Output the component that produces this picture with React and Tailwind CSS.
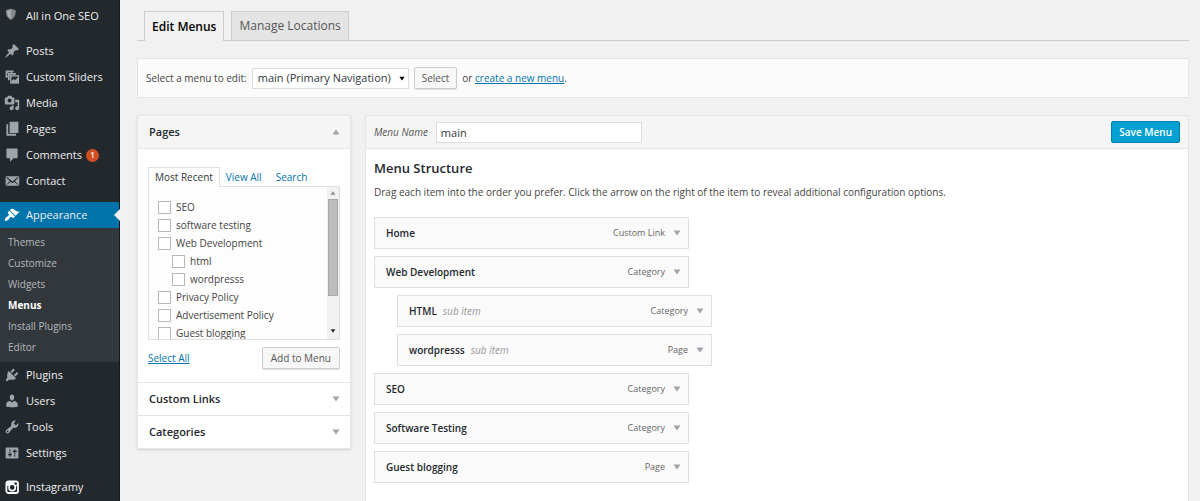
import React from "react";

const paths = {
  posts:
    "M10.44 3.02l1.82-1.82 6.36 6.35-1.83 1.82c-1.05-.68-2.48-.57-3.41.36l-.75.75c-.92.93-1.04 2.35-.35 3.41l-1.83 1.82-2.41-2.41-2.8 2.79c-.42.42-3.38 2.71-3.8 2.29s1.86-3.39 2.28-3.81l2.79-2.79L4.1 9.36l1.83-1.82c1.05.69 2.48.57 3.4-.36l.75-.75c.93-.92 1.05-2.35.36-3.41z",
  media:
    "M13 11V4c0-.55-.45-1-1-1h-1.67L9 1H5L3.67 3H2c-.55 0-1 .45-1 1v7c0 .55.45 1 1 1h10c.55 0 1-.45 1-1zM7 4.5c1.38 0 2.5 1.12 2.5 2.5S8.38 9.5 7 9.5 4.5 8.38 4.5 7 5.62 4.5 7 4.5zM14 6h5v10.5c0 1.38-1.12 2.5-2.5 2.5S14 17.88 14 16.5s1.12-2.5 2.5-2.5c.17 0 .34.02.5.05V9h-3V6zm-4 8.05V13h2v3.5c0 1.38-1.12 2.5-2.5 2.5S7 17.88 7 16.5 8.12 14 9.5 14c.17 0 .34.02.5.05z",
  pages: "M7 15V1h11v14H7zm-1 1h9v2.500H3V4h2.200v12z",
  comments:
    "M4 2h12c.6 0 1 .4 1 1v10c0 .6-.4 1-1 1h-4l-4.500 4.500V14H4c-.6 0-1-.4-1-1V3c0-.6.4-1 1-1z",
  contact:
    "M19 14.5v-9c0-.83-.67-1.5-1.5-1.5H3.49c-.83 0-1.5.67-1.5 1.5v9c0 .83.67 1.5 1.5 1.5H17.500c.83 0 1.5-.67 1.5-1.5zm-1.31-9.11c.33.33.15.67-.03.84L13.6 9.95l3.9 4.06c.12.14.2.36.06.51-.13.16-.43.15-.56.05l-4.37-3.73-2.14 1.95-2.13-1.95-4.37 3.73c-.13.1-.43.11-.56-.05-.14-.15-.06-.37.06-.51l3.9-4.06-4.06-3.72c-.18-.17-.36-.51-.03-.84s.67-.17.95.07l6.24 5.04 6.25-5.04c.28-.24.62-.4.95-.07z",
  appearance:
    "M14.48 11.06L7.41 3.99l1.5-1.5c.5-.56 2.3-.47 3.51.32 1.21.8 1.43 1.28 2.91 2.1 1.18.64 2.45 1.26 4.45.85zm-.71.71L6.7 4.7 4.93 6.47c-.39.39-.39 1.02 0 1.41l1.06 1.06c.39.39.39 1.03 0 1.42-.6.6-1.43 1.11-2.21 1.69-.35.26-.7.53-1.01.84C1.43 14.23.4 16.08 1.4 17.07c.99 1 2.84-.03 4.18-1.36.31-.31.58-.66.85-1.02.57-.78 1.08-1.61 1.69-2.21.39-.39 1.02-.39 1.41 0l1.06 1.06c.39.39 1.02.39 1.41 0z",
  plugins:
    "M13.11 4.36L9.87 7.6 8 5.73l3.24-3.24c.35-.34 1.05-.2 1.56.32.52.51.66 1.21.31 1.55zm-8 1.77l.91-1.12 9.01 9.01-1.19.84c-.71.71-2.63 1.16-3.82 1.16H6.14L4.9 17.26c-.59.59-1.54.59-2.12 0-.59-.58-.59-1.53 0-2.12l1.24-1.24v-3.88c0-1.13.4-3.19 1.09-3.89zm7.26 3.97l3.24-3.24c.34-.35 1.04-.21 1.55.31.52.51.66 1.21.31 1.55l-3.24 3.25z",
  users:
    "M10 9.25c-2.27 0-2.73-3.44-2.73-3.44C7 4.02 7.82 2 9.97 2c2.16 0 2.98 2.02 2.71 3.81 0 0-.41 3.44-2.68 3.44zm0 2.57L12.72 10c2.39 0 4.52 2.33 4.52 4.53v2.49s-3.65 1.13-7.24 1.13c-3.65 0-7.24-1.13-7.24-1.13v-2.49c0-2.25 1.94-4.48 4.47-4.48z",
  tools:
    "M16.68 9.77c-1.34 1.34-3.3 1.67-4.95.99l-5.41 6.52c-.99.99-2.59.99-3.58 0s-.99-2.59 0-3.57l6.52-5.42c-.68-1.65-.35-3.61.99-4.95 1.28-1.28 3.12-1.62 4.72-1.06l-2.89 2.89 2.82 2.82 2.86-2.87c.53 1.58.18 3.39-1.08 4.65zM3.81 16.21c.4.39 1.04.39 1.43 0 .4-.4.4-1.04 0-1.43-.39-.4-1.03-.4-1.43 0-.39.39-.39 1.03 0 1.43z",
  settings:
    "M18 16V4c0-.55-.45-1-1-1H3c-.55 0-1 .45-1 1v12c0 .55.45 1 1 1h14c.55 0 1-.45 1-1zM8 11h1c.55 0 1 .45 1 1s-.45 1-1 1H8v1.5c0 .28-.22.5-.5.5s-.5-.22-.5-.5V13H6c-.55 0-1-.45-1-1s.45-1 1-1h1V5.5c0-.28.22-.5.5-.5s.5.22.5.5V11zm5-2h-1c-.55 0-1-.45-1-1s.45-1 1-1h1V5.5c0-.28.22-.5.5-.5s.5.22.5.5V7h1c.55 0 1 .45 1 1s-.45 1-1 1h-1v5.5c0 .28-.22.5-.5.5s-.5-.22-.5-.5V9z",
};

function Icon({ name }) {
  if (name === "seo") {
    return (
      <svg viewBox="0 0 20 20" className="h-4 w-4 shrink-0" aria-hidden="true">
        <path d="M2.500 2.500c2.500-.2 4-.9 6-1.500 2 .6 3.500 1.300 6 1.500.6 6-1.500 10-6 12.500C4 12.500 2 8.500 2.500 2.500z" fill="#85898c" />
        <path d="M4 3.600c1.800-.2 3-.6 4.500-1.100v10.800C5 11 3.800 8.500 4 3.600z" fill="#adb0b2" />
      </svg>
    );
  }
  if (name === "sliders") {
    return (
      <svg viewBox="0 0 20 20" className="h-4 w-4 shrink-0" aria-hidden="true" fill="none" stroke="#a0a5aa">
        <path d="M3 11V3h9" strokeWidth="2" />
        <path d="M6 14V6h9" strokeWidth="2" />
        <rect x="8.500" y="8.500" width="9.500" height="9" strokeWidth="1.600" />
        <path d="M9 16l3-3 2 1.500 3.500-3.500v6H9z" fill="#a0a5aa" strokeWidth="1" />
        <path d="M3 3l7 7M8 3l6 6M3 8l5 5" strokeWidth="1.400" />
      </svg>
    );
  }
  if (name === "instagram") {
    return (
      <svg viewBox="0 0 20 20" className="h-4 w-4 shrink-0" aria-hidden="true">
        <rect x="3" y="3" width="14.500" height="14.500" rx="2.500" fill="none" stroke="#fff" strokeWidth="2.200" />
        <path d="M3 4h14v4.500H3z" fill="#fff" />
        <rect x="13" y="4.500" width="3" height="3" rx=".5" fill="#23282d" />
        <circle cx="10.250" cy="10.500" r="4" fill="#23282d" stroke="#fff" strokeWidth="2" />
      </svg>
    );
  }
  return (
    <svg viewBox="0 0 20 20" className="h-4 w-4 shrink-0" aria-hidden="true">
      <path d={paths[name]} fill={name === "appearance" ? "#fff" : "#a0a5aa"} />
    </svg>
  );
}

function NavItem({ icon, label, badge }) {
  return (
    <a href="#" className="flex h-[26px] items-center gap-1.5 pl-1 text-[11px] font-medium text-[#eee]">
      <Icon name={icon} />
      <span>{label}</span>
      {badge && (
        <span className="-ml-0.5 flex h-[13px] w-[13px] items-center justify-center rounded-full bg-[#d54e21] text-[8px] font-semibold text-white">
          {badge}
        </span>
      )}
    </a>
  );
}

function Triangle({ up = false, className = "h-1.5 w-2 text-[#a0a5aa]" }) {
  return (
    <svg viewBox="0 0 8 6" className={`shrink-0 ${className}`} aria-hidden="true">
      <path d={up ? "M4 0.5L7.500 5.500H.5z" : "M.5.5h7L4 5.500z"} fill="currentColor" />
    </svg>
  );
}

const submenu = ["Themes", "Customize", "Widgets", "Menus", "Install Plugins", "Editor"];

function Sidebar() {
  return (
    <nav className="w-[120px] shrink-0 border-r border-[#15191c] bg-[#23282d] pt-[3px]">
      <NavItem icon="seo" label="All in One SEO" />
      <div className="mt-[9px]">
        <NavItem icon="posts" label="Posts" />
        <NavItem icon="sliders" label="Custom Sliders" />
        <NavItem icon="media" label="Media" />
        <NavItem icon="pages" label="Pages" />
        <NavItem icon="comments" label="Comments" badge="1" />
        <NavItem icon="contact" label="Contact" />
      </div>
      <div className="relative mt-2 bg-[#0073aa]">
        <NavItem icon="appearance" label="Appearance" />
        <svg viewBox="0 0 6 12" className="absolute top-[7px] -right-px h-3 w-1.5" aria-hidden="true">
          <path d="M6 0v12L0 6z" fill="#f1f1f1" />
        </svg>
      </div>
      <ul className="bg-[#32373c] pt-1 pb-1">
        {submenu.map((label) => (
          <li key={label}>
            <a
              href="#"
              className={`flex h-[21px] items-center pl-2 text-[10px] ${
                label === "Menus" ? "font-bold text-white" : "text-[#b4b9be]"
              }`}
            >
              {label}
            </a>
          </li>
        ))}
      </ul>
      <NavItem icon="plugins" label="Plugins" />
      <NavItem icon="users" label="Users" />
      <NavItem icon="tools" label="Tools" />
      <NavItem icon="settings" label="Settings" />
      <div className="mt-2">
        <NavItem icon="instagram" label="Instagramy" />
      </div>
    </nav>
  );
}

const pages = [
  { label: "SEO" },
  { label: "software testing" },
  { label: "Web Development" },
  { label: "html", child: true },
  { label: "wordpresss", child: true },
  { label: "Privacy Policy" },
  { label: "Advertisement Policy" },
  { label: "Guest blogging" },
];

function PageList() {
  return (
    <div className="-mt-px flex h-[154px] border border-[#dfdfdf] bg-[#fdfdfd]">
      <div className="flex-1 overflow-hidden pt-[11px] pl-[9px]">
        {pages.map(({ label, child }) => (
          <label
            key={label}
            className={`flex h-[18px] items-center gap-[5px] text-[10px] text-[#444] ${child ? "ml-3.5" : ""}`}
          >
            <input type="checkbox" className="h-[13px] w-[13px] shrink-0 appearance-none border border-[#b4b9be] bg-white" />
            {label}
          </label>
        ))}
      </div>
      <div className="flex w-3 flex-col items-center bg-[#f1f1f1]">
        <div className="flex h-3 items-center">
          <Triangle up className="h-1 w-1.5 text-[#8a8a8a]" />
        </div>
        <div className="h-[97px] w-2.5 border border-[#a8a8a8] bg-[#bcbcbc]" />
        <div className="mt-auto flex h-4 items-center">
          <Triangle className="h-1 w-1.5 text-[#222]" />
        </div>
      </div>
    </div>
  );
}

function SectionToggle({ label }) {
  return (
    <button className="flex h-[33px] w-full items-center justify-between border-t border-[#e5e5e5] pr-2.5 pl-[11px] text-[11px] font-semibold text-[#23282d]">
      {label}
      <Triangle />
    </button>
  );
}

const btn = "rounded-[2px] border border-[#ccc] bg-[#f7f7f7] text-[10px] text-[#555] shadow-[0_1px_0_#e0e0e0]";

function PagesPanel() {
  return (
    <aside className="w-[214px] shrink-0 self-start border border-[#e5e5e5] bg-white shadow-sm">
      <button className="flex h-8 w-full items-center justify-between bg-[#f5f5f5] pr-2.5 pl-[11px] text-[11px] font-semibold text-[#23282d]">
        Pages
        <Triangle up />
      </button>
      <div className="border-t border-[#e5e5e5] px-2.5 pt-[18px] pb-[13px]">
        <div className="flex items-stretch text-[10px]">
          <button className="relative h-5 border border-b-0 border-[#dfdfdf] bg-[#fdfdfd] px-1.5 text-[#32373c]">
            Most Recent
          </button>
          <button className="ml-1.5 h-5 text-[#0073aa]">View All</button>
          <button className="ml-3.5 h-5 text-[#0073aa]">Search</button>
        </div>
        <PageList />
        <div className="mt-[7px] flex items-center justify-between">
          <a href="#" className="text-[10px] text-[#0073aa] underline">
            Select All
          </a>
          <button className={`${btn} h-[22px] px-2`}>Add to Menu</button>
        </div>
      </div>
      <SectionToggle label="Custom Links" />
      <SectionToggle label="Categories" />
    </aside>
  );
}

const items = [
  { title: "Home", type: "Custom Link" },
  { title: "Web Development", type: "Category" },
  { title: "HTML", type: "Category", sub: true },
  { title: "wordpresss", type: "Page", sub: true },
  { title: "SEO", type: "Category" },
  { title: "Software Testing", type: "Category" },
  { title: "Guest blogging", type: "Page" },
];

function MenuItem({ title, type, sub }) {
  return (
    <li
      className={`flex h-8 w-[315px] items-center border border-[#dfdfdf] bg-[#fafafa] pr-[7px] pl-[11px] text-[10px] ${
        sub ? "ml-[23px]" : ""
      }`}
    >
      <span className="font-semibold text-[#23282d]">{title}</span>
      {sub && <span className="ml-1.5 text-[#999] italic">sub item</span>}
      <span className="ml-auto text-[9px] text-[#666]">{type}</span>
      <button className="ml-2 flex" aria-label={`Edit ${title}`}>
        <Triangle />
      </button>
    </li>
  );
}

function MenuPanel() {
  return (
    <section className="min-w-0 flex-1 border border-b-0 border-[#e5e5e5] bg-white">
      <div className="flex h-[33px] items-center border-b border-[#e5e5e5] bg-[#f5f5f5] px-2">
        <label htmlFor="menu-name" className="text-[10px] text-[#555] italic">
          Menu Name
        </label>
        <input
          id="menu-name"
          defaultValue="main"
          className="ml-2 h-[21px] w-[206px] border border-[#ddd] bg-white px-1 text-[11px] text-[#32373c]"
        />
        <button className="ml-auto h-[22px] rounded-[2px] border border-[#0080b0] bg-[#00a0d2] px-[7px] text-[10px] font-semibold text-white">
          Save Menu
        </button>
      </div>
      <div className="px-2 pt-[9px]">
        <h3 className="text-[13px] leading-5 font-semibold text-[#23282d]">Menu Structure</h3>
        <p className="mt-1.5 text-[10px] leading-4 text-[#444]">
          Drag each item into the order you prefer. Click the arrow on the right of the item to reveal additional
          configuration options.
        </p>
        <ul className="mt-[17px] space-y-[7px]">
          {items.map((item) => (
            <MenuItem key={item.title} {...item} />
          ))}
        </ul>
      </div>
    </section>
  );
}

export default function App() {
  return (
    <div className="flex min-h-screen bg-[#f1f1f1] font-['Open_Sans',sans-serif] text-[#444]">
      <Sidebar />
      <main className="flex min-w-0 flex-1 flex-col pt-[11px] pr-[11px] pl-[17px]">
        <div className="flex items-end gap-[7px] border-b border-[#ccc] pl-[7px] text-xs font-semibold">
          <button className="-mb-px h-[30px] border border-b-0 border-[#ccc] bg-[#f1f1f1] px-[7px] text-black">
            Edit Menus
          </button>
          <button className="h-[29px] border border-b-0 border-[#ccc] bg-[#e4e4e4] px-[7px] font-medium text-[#555]">
            Manage Locations
          </button>
        </div>

        <form
          onSubmit={(e) => e.preventDefault()}
          className="mt-[17px] flex h-10 items-center border border-[#e5e5e5] bg-[#fbfbfb] px-2 text-[10px]"
        >
          <label htmlFor="menu">Select a menu to edit:</label>
          <span className="relative ml-[5px] flex items-center">
            <select
              id="menu"
              className="h-[21px] w-[157px] appearance-none border border-[#ddd] bg-white pl-[5px] text-[11px] text-[#32373c]"
            >
              <option>main (Primary Navigation)</option>
            </select>
            <Triangle className="pointer-events-none absolute right-1 h-[5px] w-1.5 text-black" />
          </span>
          <button className={`${btn} ml-[5px] h-[22px] px-[7px]`}>Select</button>
          <span className="ml-[5px]">
            or{" "}
            <a href="#" className="text-[#0073aa] underline">
              create a new menu
            </a>
            .
          </span>
        </form>

        <div className="mt-[17px] flex flex-1 gap-3.5">
          <PagesPanel />
          <MenuPanel />
        </div>
      </main>
    </div>
  );
}
